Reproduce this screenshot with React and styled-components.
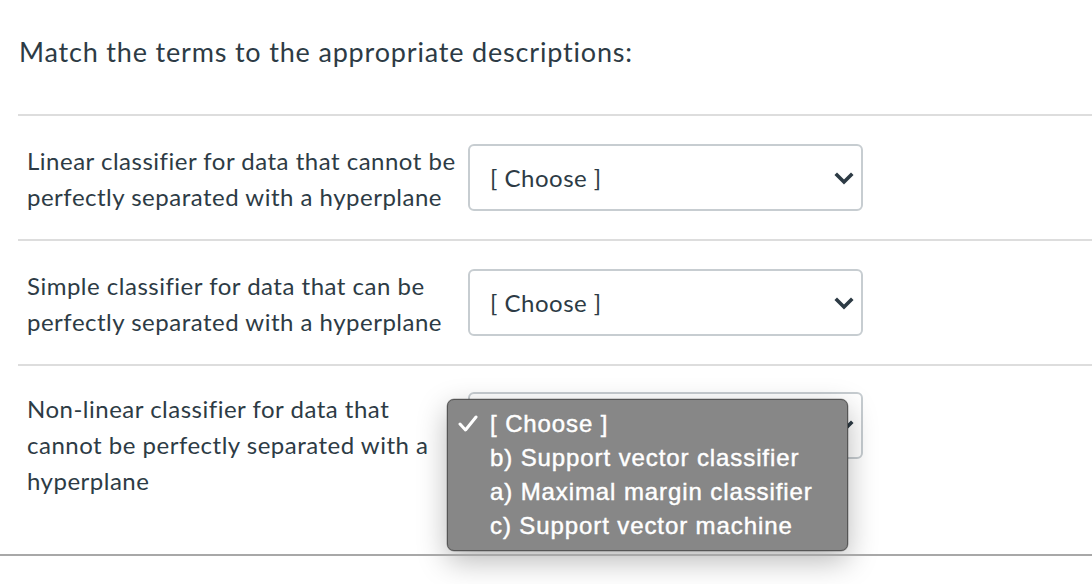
import React from "react";
import styled, { createGlobalStyle } from "styled-components";

const Global = createGlobalStyle`
  html, body { margin: 0; padding: 0; background: #ffffff; }
  body { font-family: Lato, "Noto Sans", sans-serif; color: #2d3b45; overflow: hidden; }
`;

const Page = styled.div`
  width: 1092px;
  height: 584px;
  overflow: hidden;
  position: relative;
`;

const Question = styled.div`
  padding-left: 18px;
`;

const Title = styled.h2`
  margin: 0 -40px 0 0;
  padding: 30px 0 41px 1px;
  font-size: 27px;
  font-weight: 400;
  letter-spacing: 0.82px;
  line-height: 43px;
  color: #2d3b45;
  border-bottom: 2px solid #dddddd;
`;

const Row = styled.div`
  display: flex;
  align-items: flex-start;
  padding: ${(p) => (p.$last ? "25px 0 0 9px" : "27px 0 24px 9px")};
  min-height: ${(p) => (p.$last ? "188px" : "auto")};
  box-sizing: border-box;
  border-bottom: ${(p) => (p.$last ? "none" : "2px solid #dddddd")};
  margin-right: -40px;
`;

const Term = styled.div`
  width: 434px;
  margin-right: 7px;
  flex: none;
  font-size: 24px;
  letter-spacing: 0.5px;
  line-height: 36px;
  color: #2d3b45;
`;

const SelectWrap = styled.div`
  position: relative;
  flex: none;
  margin-top: 1px;
`;

const SelectBox = styled.div`
  width: 395px;
  height: 67px;
  box-sizing: border-box;
  border: 2px solid #c7cdd1;
  border-radius: 6px;
  background: #ffffff;
  display: flex;
  align-items: center;
  justify-content: space-between;
  padding: 0 7px 0 20px;
  font-size: 24px;
  letter-spacing: 0.5px;
  color: #2d3b45;
`;

const Chevron = styled.svg`
  width: 20px;
  height: 14px;
  margin-top: 2px;
`;

const Menu = styled.div`
  position: absolute;
  left: -21px;
  top: 7px;
  width: 401px;
  height: 152px;
  box-sizing: border-box;
  background: #878787;
  border: 1px solid #555555;
  border-radius: 7px;
  box-shadow: 0 10px 30px rgba(0, 0, 0, 0.28), 0 0 0 0.5px rgba(0, 0, 0, 0.3);
  padding: 7px 0 9px;
  font-family: "Liberation Sans", Arial, sans-serif;
`;

const MenuItem = styled.div`
  height: 34px;
  display: flex;
  align-items: center;
  padding-left: 42px;
  position: relative;
  font-size: 24px;
  color: #ffffff;
  -webkit-text-stroke: 0.45px #ffffff;
  letter-spacing: 0.9px;
`;

const Check = styled.svg`
  position: absolute;
  left: 10px;
  top: 8px;
  width: 20px;
  height: 18px;
`;

const BottomRule = styled.div`
  position: absolute;
  left: 0;
  right: 0;
  top: 554px;
  height: 2px;
  background: #a8a8a8;
`;

const ChevronIcon = () => (
  <Chevron viewBox="0 0 20 14">
    <polyline points="3,3 10,10 17,3" fill="none" stroke="#2d3b45" strokeWidth="3.6" strokeLinecap="square" />
  </Chevron>
);

const Select = ({ open }) => (
  <SelectWrap>
    <SelectBox>
      <span>[ Choose ]</span>
      <ChevronIcon />
    </SelectBox>
    {open && (
      <Menu>
        <MenuItem>
          <Check viewBox="0 0 20 18">
            <polyline points="2,9 7.5,15 18,2" fill="none" stroke="#ffffff" strokeWidth="3" strokeLinecap="round" strokeLinejoin="round" />
          </Check>
          [ Choose ]
        </MenuItem>
        <MenuItem>b) Support vector classifier</MenuItem>
        <MenuItem>a) Maximal margin classifier</MenuItem>
        <MenuItem>c) Support vector machine</MenuItem>
      </Menu>
    )}
  </SelectWrap>
);

const rows = [
  { term: "Linear classifier for data that cannot be perfectly separated with a hyperplane" },
  { term: "Simple classifier for data that can be perfectly separated with a hyperplane" },
  { term: "Non-linear classifier for data that cannot be perfectly separated with a hyperplane", open: true },
];

export default function App() {
  return (
    <Page>
      <Global />
      <Question>
        <Title>Match the terms to the appropriate descriptions:</Title>
        {rows.map((r, i) => (
          <Row key={i} $last={i === rows.length - 1}>
            <Term>{r.term}</Term>
            <Select open={r.open} />
          </Row>
        ))}
      </Question>
      <BottomRule />
    </Page>
  );
}
